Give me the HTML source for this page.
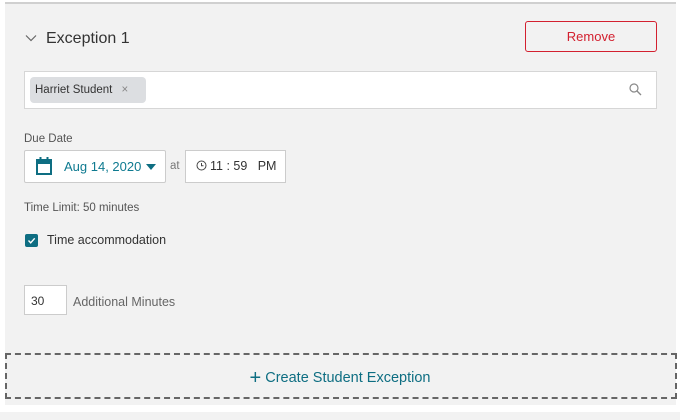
<!DOCTYPE html>
<html><head><style>
body{margin:0;width:680px;height:420px;background:#fff;font-family:"Liberation Sans",sans-serif;position:relative;overflow:hidden}
.a{position:absolute}
.panel{left:5px;top:2px;width:671px;height:401px;background:#f2f2f2;border-top:2px solid #d0d0d0}
.t{color:#555}
</style></head><body>
<div class="a panel"></div>
<div class="a" style="left:0;top:412px;width:680px;height:8px;background:#f2f2f2"></div>
<svg class="a" style="left:25px;top:34px" width="12" height="8"><path d="M1 1.5 L6 6.5 L11 1.5" fill="none" stroke="#666" stroke-width="1.2"/></svg>
<div class="a" style="left:46px;top:30px;font-size:16px;color:#333">Exception 1</div>
<div class="a" style="left:525px;top:21px;width:130px;height:29px;border:1px solid #d3202f;border-radius:3px;color:#d3202f;font-size:13px;text-align:center;line-height:29px">Remove</div>
<div class="a" style="left:24px;top:71px;width:631px;height:36px;border:1px solid #d6d6d6;background:#fff"></div>
<div class="a" style="left:30px;top:77px;width:116px;height:26px;background:#dcdee1;border-radius:4px;font-size:11.5px;color:#333;line-height:27px;padding-left:5px;box-sizing:border-box">Harriet Student <span style="color:#888;margin-left:6px">×</span></div>
<svg class="a" style="left:629px;top:83px" width="13" height="13"><circle cx="5" cy="5" r="4" fill="none" stroke="#888" stroke-width="1.2"/><path d="M8 8 L12 12" stroke="#888" stroke-width="1.3"/></svg>
<div class="a t" style="left:24px;top:133px;font-size:11.5px">Due Date</div>
<div class="a" style="left:24px;top:150px;width:140px;height:31px;border:1px solid #ccc;border-radius:2px;background:#fff"></div>
<svg class="a" style="left:36px;top:157px" width="16" height="18"><rect x="1" y="3" width="14" height="14" fill="none" stroke="#0e6e82" stroke-width="2"/><rect x="1" y="3" width="14" height="4" fill="#0e6e82"/><rect x="3.5" y="0" width="2" height="4" fill="#0e6e82"/><rect x="10.5" y="0" width="2" height="4" fill="#0e6e82"/></svg>
<div class="a" style="left:64px;top:159px;font-size:13px;color:#0e7a90">Aug 14, 2020</div>
<svg class="a" style="left:146px;top:164px" width="10" height="6"><path d="M0 0 L10 0 L5 6Z" fill="#0e6e82"/></svg>
<div class="a t" style="left:170px;top:160px;font-size:11.5px;color:#777">at</div>
<div class="a" style="left:185px;top:150px;width:99px;height:31px;border:1px solid #ccc;background:#fff"></div>
<svg class="a" style="left:196px;top:160px" width="11" height="11"><circle cx="5.5" cy="5.5" r="4.5" fill="none" stroke="#444" stroke-width="1"/><path d="M5.5 3 V5.8 H7.5" fill="none" stroke="#444"/></svg>
<div class="a" style="left:210px;top:159px;font-size:12.5px;color:#333">11 : 59&nbsp;&nbsp; PM</div>
<div class="a t" style="left:24px;top:202px;font-size:11.5px">Time Limit: 50 minutes</div>
<div class="a" style="left:25px;top:234px;width:13px;height:13px;background:#0e6e82;border-radius:2px"></div>
<svg class="a" style="left:25px;top:234px" width="13" height="13"><path d="M3.5 6.5 L5.7 8.8 L9.7 4.3" fill="none" stroke="#fff" stroke-width="1.4"/></svg>
<div class="a" style="left:47px;top:233px;font-size:12.5px;color:#333">Time accommodation</div>
<div class="a" style="left:24px;top:285px;width:43px;height:30px;border:1px solid #ccc;background:#fff;font-size:12px;color:#333;line-height:30px;padding-left:6px;box-sizing:border-box">30</div>
<div class="a t" style="left:73px;top:295px;font-size:12.5px;color:#666">Additional Minutes</div>
<div class="a" style="left:5px;top:353px;width:668px;height:42px;border:2px dashed #666"></div>
<div class="a" style="left:0;top:367px;width:680px;text-align:center;font-size:14.5px;color:#0e6e82"><span style="font-size:20px;vertical-align:-2px">+</span> Create Student Exception</div>
</body></html>
